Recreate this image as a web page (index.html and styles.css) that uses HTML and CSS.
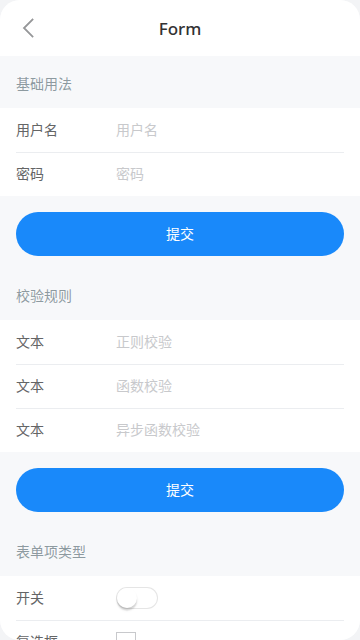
FILE: index.html
```html
<!DOCTYPE html>
<html lang="zh-CN">
<head>
<meta charset="utf-8">
<meta name="viewport" content="width=360, initial-scale=1">
<title>Form</title>
<link rel="stylesheet" href="styles.css">
</head>
<body>
<div class="phone">
  <header class="nav-bar">
    <span class="nav-back">
      <svg width="12" height="20" viewBox="0 0 12 20"><path d="M10.5 1.5 L2 10 L10.5 18.5" fill="none" stroke="#969799" stroke-width="1.8" stroke-linecap="square" stroke-linejoin="miter"/></svg>
    </span>
    <div class="nav-title">Form</div>
  </header>

  <h2 class="block-title first">基础用法</h2>
  <div class="cell-group">
    <div class="cell"><span class="label">用户名</span><span class="value placeholder">用户名</span></div>
    <div class="cell"><span class="label">密码</span><span class="value placeholder">密码</span></div>
  </div>
  <div class="btn-wrap"><button class="btn">提交</button></div>

  <h2 class="block-title">校验规则</h2>
  <div class="cell-group">
    <div class="cell"><span class="label">文本</span><span class="value placeholder">正则校验</span></div>
    <div class="cell"><span class="label">文本</span><span class="value placeholder">函数校验</span></div>
    <div class="cell"><span class="label">文本</span><span class="value placeholder">异步函数校验</span></div>
  </div>
  <div class="btn-wrap"><button class="btn">提交</button></div>

  <h2 class="block-title">表单项类型</h2>
  <div class="cell-group">
    <div class="cell"><span class="label">开关</span><span class="value"><span class="switch"><span class="switch-node"></span></span></span></div>
    <div class="cell"><span class="label">复选框</span><span class="value"><span class="checkbox"></span></span></div>
    <div class="cell"><span class="label">复选框组</span><span class="value"><span class="checkbox"></span></span></div>
  </div>
</div>
</body>
</html>
```

FILE: styles.css
```css
* { box-sizing: border-box; }
html, body {
  margin: 0;
  padding: 0;
  width: 360px;
  height: 640px;
  overflow: hidden;
  background: #f3f4f6;
}
body {
  font-family: "Open Sans", "Noto Sans CJK SC", sans-serif;
  -webkit-font-smoothing: antialiased;
}
.phone {
  width: 360px;
  height: 640px;
  border-radius: 20px;
  overflow: hidden;
  background: #f7f8fa;
}
.nav-bar {
  position: relative;
  height: 56px;
  background: #fff;
  display: flex;
  align-items: center;
  justify-content: center;
}
.nav-back {
  position: absolute;
  left: 22px;
  top: 18px;
  display: flex;
}
.nav-title {
  font-family: "Noto Sans", "Noto Sans CJK SC", sans-serif;
  font-size: 17px;
  font-weight: 500;
  color: #323233;
}
.block-title {
  margin: 0;
  padding: 16px 16px 16px;
  font-size: 14px;
  line-height: 16px;
  font-weight: 400;
  color: rgba(69, 90, 100, 0.6);
}
.block-title.first {
  padding-top: 20px;
}
.cell-group {
  background: #fff;
}
.cell {
  position: relative;
  display: flex;
  align-items: center;
  padding: 10px 16px;
  height: 44px;
  font-size: 14px;
  line-height: 24px;
}
.cell + .cell::before {
  content: "";
  position: absolute;
  left: 16px;
  right: 16px;
  top: 0;
  border-top: 1px solid #ebedf0;
}
.label {
  width: 87px;
  margin-right: 13px;
  color: #646566;
  flex: none;
}
.value {
  display: flex;
  align-items: center;
  color: #323233;
}
.placeholder {
  color: #c8c9cc;
}
.btn-wrap {
  padding: 16px;
}
.btn {
  display: block;
  width: 100%;
  height: 44px;
  border: 0;
  border-radius: 22px;
  background: #1989fa;
  color: #fff;
  font-family: inherit;
  font-size: 14px;
  line-height: 44px;
  padding: 0;
}
.switch {
  position: relative;
  display: block;
  width: 42px;
  height: 22px;
  border: 1px solid rgba(0, 0, 0, 0.1);
  border-radius: 11px;
  background: #fff;
}
.switch-node {
  position: absolute;
  left: 0;
  top: 0;
  width: 20px;
  height: 20px;
  border-radius: 50%;
  background: #fff;
  box-shadow: 0 3px 1px 0 rgba(0, 0, 0, 0.05), 0 2px 2px 0 rgba(0, 0, 0, 0.1), 0 3px 3px 0 rgba(0, 0, 0, 0.05);
}
.checkbox {
  display: block;
  width: 20px;
  height: 20px;
  border: 1px solid #c8c9cc;
}
```
